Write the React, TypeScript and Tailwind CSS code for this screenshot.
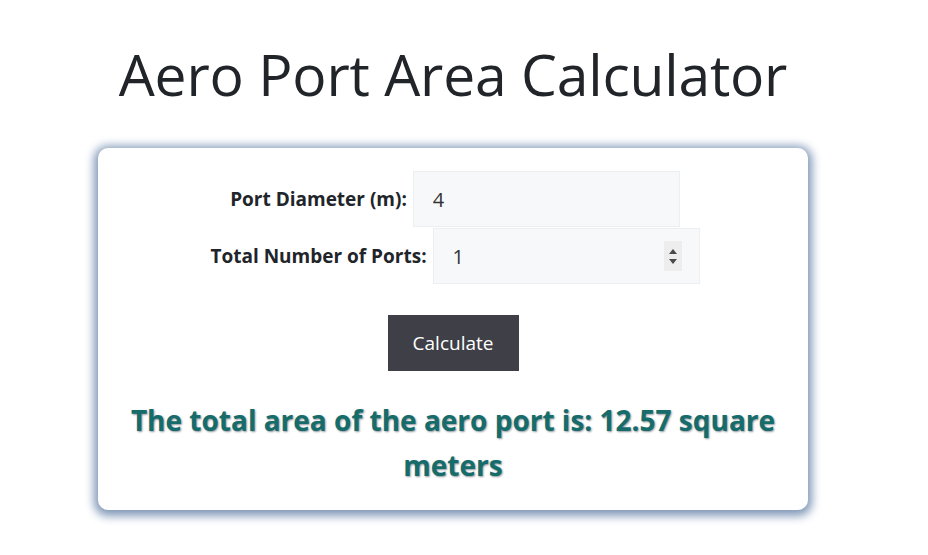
import React, { useState } from "react";

export default function App() {
  const [diameter, setDiameter] = useState("4");
  const [ports, setPorts] = useState("1");
  return (
    <div className="min-h-[555px] bg-white text-[#212529]" style={{ fontFamily: '"Open Sans", "Noto Sans", sans-serif' }}>
      <div className="ml-[98px] w-[710px] pt-[34px]">
        <h1 className="text-center text-[57px] leading-[80px] font-normal text-[#212529] tracking-[-0.2px]">
          Aero Port Area Calculator
        </h1>
        <div className="mt-[34px] rounded-[10px] bg-white px-[20px] pt-[23px] pb-[22px] shadow-[0_2px_10px_4px_#8198b8]">
          <div className="flex flex-col items-center">
            <div className="flex items-center gap-[6px] pl-[4px]">
              <label className="text-[19px] font-bold text-[#212529]">Port Diameter (m):</label>
              <input
                type="text"
                value={diameter}
                onChange={(e) => setDiameter(e.target.value)}
                className="h-[56px] w-[267px] border border-[#eceef0] bg-[#f7f8f9] pl-[19px] text-[20px] text-[#333] outline-none"
              />
            </div>
            <div className="mt-px flex items-center gap-[6px] pl-[4px]">
              <label className="text-[19px] font-bold text-[#212529]">Total Number of Ports:</label>
              <div className="relative">
                <input
                  type="number"
                  value={ports}
                  onChange={(e) => setPorts(e.target.value)}
                  className="h-[56px] w-[267px] appearance-none border border-[#eceef0] bg-[#f7f8f9] pl-[19px] pr-[40px] text-[20px] text-[#333] outline-none [&::-webkit-inner-spin-button]:appearance-none [&::-webkit-outer-spin-button]:appearance-none [-moz-appearance:textfield]"
                />
                <div className="absolute right-[18px] top-[13px] flex h-[30px] w-[18px] flex-col items-center justify-center gap-[5px] bg-[#ededed]">
                  <svg width="8" height="5" viewBox="0 0 8 5"><path d="M0 5 L4 0 L8 5 Z" fill="#4a4a4a" /></svg>
                  <svg width="8" height="5" viewBox="0 0 8 5"><path d="M0 0 L4 5 L8 0 Z" fill="#4a4a4a" /></svg>
                </div>
              </div>
            </div>
            <button className="mt-[31px] h-[56px] w-[131px] bg-[#3f3f47] text-[19px] text-white">
              Calculate
            </button>
            <p className="mt-[27px] max-w-[680px] text-center text-[28px] font-bold leading-[45px] text-[#166b6b] [text-shadow:1px_1px_2px_#8f969c]">
              The total area of the aero port is: 12.57 square meters
            </p>
          </div>
        </div>
      </div>
    </div>
  );
}
